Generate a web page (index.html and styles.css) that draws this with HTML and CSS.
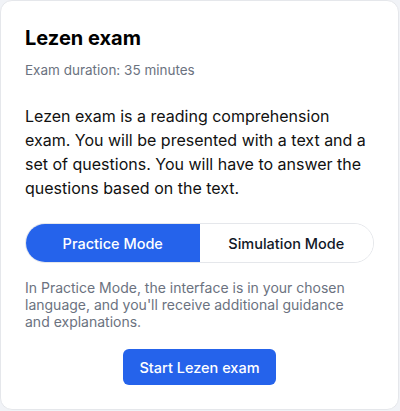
FILE: index.html
```html
<!DOCTYPE html>
<html>
<head>
<meta charset="utf-8">
<link rel="stylesheet" href="styles.css">
</head>
<body>
<div class="card">
  <h1 class="title">Lezen exam</h1>
  <p class="duration">Exam duration: 35 minutes</p>
  <p class="desc">Lezen exam is a reading comprehension exam. You will be presented with a text and a set of questions. You will have to answer the questions based on the text.</p>
  <div class="toggle">
    <button class="mode active">Practice Mode</button>
    <button class="mode">Simulation Mode</button>
  </div>
  <p class="note">In Practice Mode, the interface is in your chosen language, and you'll receive additional guidance and explanations.</p>
  <div class="actions">
    <button class="start">Start Lezen exam</button>
  </div>
</div>
</body>
</html>
```
FILE: styles.css
```css
* { box-sizing: border-box; }
html, body { margin: 0; padding: 0; }
body {
  background: #f1f3f7;
  font-family: Inter, "Noto Sans", sans-serif;
  width: 400px;
  height: 411px;
}
.card {
  width: 399px;
  height: 410px;
  background: #ffffff;
  border: 1px solid #e5e7eb;
  border-radius: 12px;
  padding: 23px 24px 24px 24px;
}
.title {
  margin: 0;
  font-size: 20px;
  line-height: 28px;
  font-weight: 700;
  color: #000;
}
.duration {
  margin: 8px 0 0 0;
  font-size: 13.5px;
  line-height: 20px;
  color: #6b7280;
}
.desc {
  margin: 24px 0 0 0;
  font-size: 16px;
  line-height: 24px;
  color: #111;
}
.toggle {
  margin-top: 23px;
  display: flex;
  height: 40px;
  border: 1px solid #e5e7eb;
  border-radius: 999px;
  overflow: hidden;
}
.mode {
  flex: 1;
  border: none;
  background: #fff;
  font-family: inherit;
  font-size: 14.5px;
  font-weight: 500;
  color: #111827;
  padding: 0;
}
.mode.active {
  background: #2563eb;
  color: #fff;
}
.note {
  margin: 16px 0 0 0;
  padding-right: 8px;
  font-size: 14px;
  line-height: 17px;
  color: #6b7280;
}
.actions {
  display: flex;
  justify-content: center;
  margin-top: 19px;
}
.start {
  background: #2563eb;
  color: #fff;
  border: none;
  border-radius: 6px;
  font-family: inherit;
  font-size: 14.5px;
  font-weight: 500;
  height: 36px;
  padding: 0 16px;
}
```
